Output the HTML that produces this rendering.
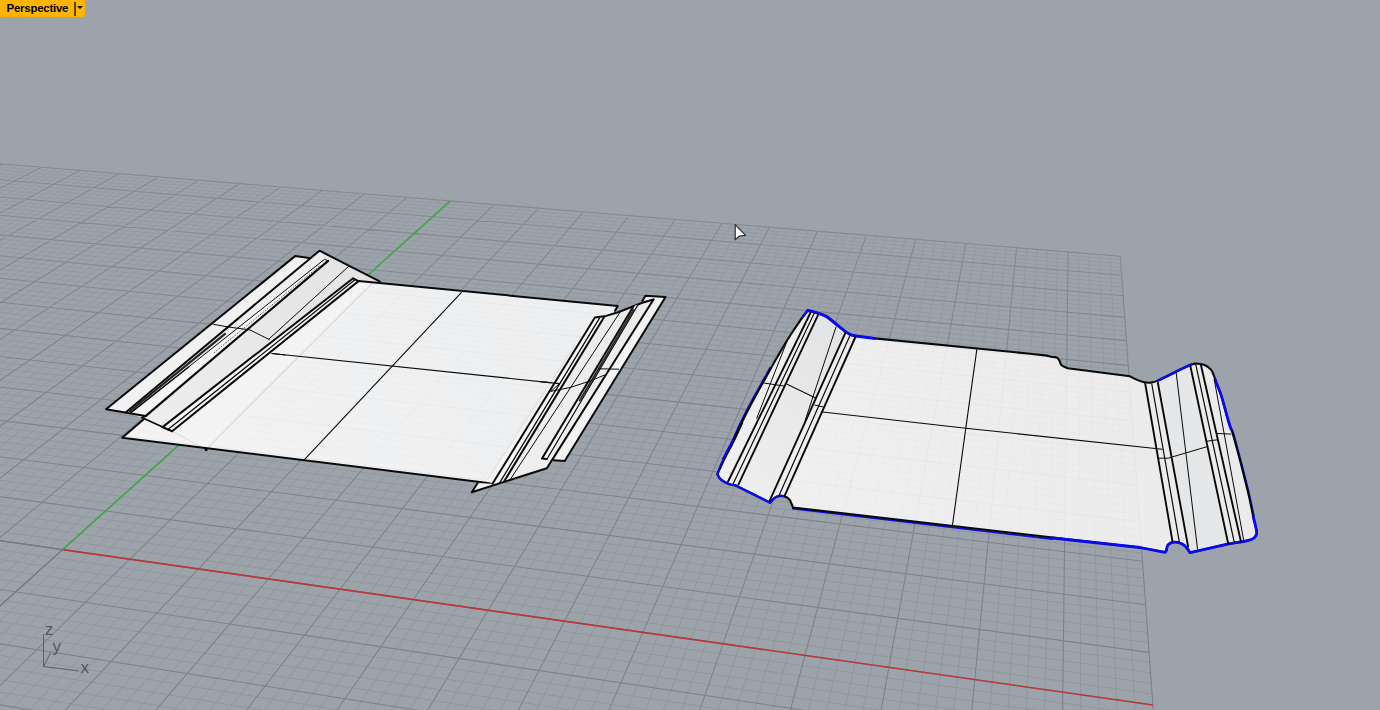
<!DOCTYPE html>
<html><head><meta charset="utf-8"><title>Perspective</title>
<style>
html,body{margin:0;padding:0;background:#9da3aa;overflow:hidden}
#vp{position:relative;width:1380px;height:710px;background:#9da3aa;overflow:hidden;font-family:"Liberation Sans",sans-serif}
#vp svg{position:absolute;left:0;top:0}
#title{position:absolute;left:0;top:0;width:85px;height:17px;background:#ffb400;clip-path:polygon(0 0,100% 0,100% 14.6px,83px 100%,0 100%)}
#title span{position:absolute;left:6.5px;top:1px;font-size:11.4px;font-weight:bold;color:#000;line-height:14px;letter-spacing:-0.2px}
#title i{position:absolute;left:73.8px;top:2px;width:2px;height:13.6px;background:#5c4300}
#title b{position:absolute;left:76.8px;top:6.4px;width:0;height:0;border-left:3px solid transparent;border-right:3px solid transparent;border-top:3.6px solid #000}
.ax{font-size:17px;fill:#55585c;font-family:"Liberation Sans",sans-serif}
</style></head><body>
<div id="vp">
<svg width="1380" height="710" viewBox="0 0 1380 710">
<defs>
<linearGradient id="gMainL" gradientUnits="userSpaceOnUse" x1="150" y1="440" x2="600" y2="300"><stop offset="0" stop-color="#f3f3f4"/><stop offset="1" stop-color="#eeeff0"/></linearGradient>
<linearGradient id="gPanL" gradientUnits="userSpaceOnUse" x1="150" y1="420" x2="350" y2="260"><stop offset="0" stop-color="#ededed"/><stop offset="1" stop-color="#e4e4e4"/></linearGradient>
<linearGradient id="gPanR" gradientUnits="userSpaceOnUse" x1="480" y1="490" x2="640" y2="300"><stop offset="0" stop-color="#f0f0f0"/><stop offset="1" stop-color="#ebebeb"/></linearGradient>
<linearGradient id="gMainR" gradientUnits="userSpaceOnUse" x1="800" y1="500" x2="1150" y2="380"><stop offset="0" stop-color="#f0f0f1"/><stop offset="1" stop-color="#ebebec"/></linearGradient>
<linearGradient id="gFlL" gradientUnits="userSpaceOnUse" x1="740" y1="480" x2="840" y2="320"><stop offset="0" stop-color="#ededee"/><stop offset="1" stop-color="#e3e4e5"/></linearGradient>
<linearGradient id="fadeMinor" gradientUnits="userSpaceOnUse" x1="0" y1="150" x2="0" y2="710"><stop offset="0" stop-color="#8c929a" stop-opacity="0.4"/><stop offset="0.35" stop-color="#8c929a" stop-opacity="0.62"/><stop offset="1" stop-color="#8c929a" stop-opacity="0.8"/></linearGradient>
<linearGradient id="fadeMajor" gradientUnits="userSpaceOnUse" x1="0" y1="150" x2="0" y2="710"><stop offset="0" stop-color="#7c8189" stop-opacity="0.7"/><stop offset="0.4" stop-color="#7c8189" stop-opacity="0.9"/><stop offset="1" stop-color="#7c8189" stop-opacity="1"/></linearGradient>
<clipPath id="clipL"><polygon points="122.2,437.8 143.7,419.3 358.5,281.1 617.8,305.9 497.7,484.2"/></clipPath>
<clipPath id="clipR"><path d="M807.7 310.6C808.3 310.7 809.6 310.6 811.5 311.1C813.4 311.6 816.6 312.7 819.1 313.6C821.6 314.5 823.8 314.9 826.6 316.6C829.4 318.3 832.9 321.5 836.0 324.0C839.1 326.5 843.1 329.9 845.5 331.6C847.9 333.3 848.6 333.6 850.2 334.3C851.8 335.0 850.8 335.1 854.9 335.8C859.0 336.5 871.4 338.0 874.7 338.4L1030.0 353.7L1047.0 355.6C1047.9 355.8 1050.9 356.7 1052.6 357.0C1054.3 357.3 1055.9 357.0 1057.0 357.6C1058.1 358.2 1058.6 359.3 1059.4 360.6C1060.2 361.9 1060.2 363.9 1061.6 365.2C1063.0 366.5 1066.7 367.8 1067.7 368.3L1130.0 376.3C1131.1 376.9 1134.4 378.7 1136.6 379.6C1138.8 380.6 1140.8 381.5 1143.2 382.0C1145.6 382.5 1148.3 382.9 1150.8 382.6C1153.3 382.3 1154.2 382.2 1158.4 380.4C1162.6 378.6 1170.3 374.4 1175.7 371.8C1181.1 369.2 1187.2 366.1 1190.9 364.7C1194.6 363.3 1195.6 363.6 1198.0 363.7C1200.4 363.8 1202.9 364.2 1205.1 365.2C1207.3 366.2 1209.7 367.9 1211.2 369.8C1212.7 371.7 1213.4 374.3 1214.2 376.4C1215.0 378.5 1215.0 379.3 1216.2 382.5C1217.4 385.7 1219.3 389.3 1221.3 395.7C1223.3 402.1 1226.3 414.0 1228.4 421.0C1230.5 428.0 1230.8 426.4 1234.0 437.9C1237.2 449.4 1244.3 476.9 1247.5 490.0C1250.7 503.1 1251.7 509.6 1253.2 516.4C1254.7 523.2 1256.0 527.5 1256.5 530.6C1257.0 533.7 1256.8 533.5 1256.3 534.8C1255.8 536.1 1254.8 537.6 1253.2 538.6C1251.6 539.6 1250.7 540.0 1246.6 540.9C1242.5 541.8 1231.7 543.3 1228.7 543.8L1190.0 552.7C1189.5 552.0 1188.3 549.8 1187.2 548.5C1186.1 547.2 1185.0 545.7 1183.4 544.7C1181.8 543.7 1179.6 542.8 1177.7 542.4C1175.8 542.0 1173.8 541.9 1172.1 542.4C1170.4 542.9 1168.8 543.9 1167.8 545.2C1166.8 546.5 1166.9 549.2 1166.4 550.4C1165.9 551.6 1165.2 552.0 1165.0 552.3L1140.0 547.5L793.0 507.5C792.7 506.8 792.0 504.6 791.3 503.2C790.6 501.8 790.3 500.2 789.0 499.0C787.7 497.8 785.0 496.6 783.3 496.1C781.6 495.6 780.2 495.7 778.6 496.1C777.0 496.5 775.3 497.4 773.9 498.5C772.5 499.6 770.7 502.0 770.1 502.7L735.2 485.3C734.1 485.1 731.0 484.8 728.6 483.9C726.2 482.9 722.8 481.1 721.0 479.6C719.2 478.1 718.2 476.1 717.7 474.9C717.2 473.6 717.2 474.8 718.2 472.1C719.2 469.4 721.3 464.2 723.9 458.9C726.5 453.6 730.6 446.4 733.6 440.3C736.6 434.2 739.0 428.3 741.8 422.5C744.6 416.7 747.7 410.6 750.3 405.7C752.9 400.8 754.9 397.2 757.2 393.0C759.5 388.8 762.0 384.4 764.3 380.3C766.6 376.2 768.6 372.4 770.8 368.5C773.0 364.6 775.0 360.9 777.3 357.0C779.5 353.1 782.0 348.9 784.3 345.0C786.6 341.1 789.0 337.4 791.3 333.8C793.6 330.2 796.3 326.2 798.3 323.3C800.2 320.4 801.4 318.6 803.0 316.5C804.6 314.4 806.9 311.6 807.7 310.6Z"/></clipPath>
</defs>
<g id="grid">
<defs><path id="gMinor" d="M-2886.6 1378.3L-101.0 155.4M-2834.2 1342.7L1348.7 3400.9M-2872.9 1385.3L-93.7 156.0M-2770.5 1315.0L1339.1 3267.9M-2859.2 1392.3L-86.3 156.6M-2708.8 1288.1L1330.1 3144.0M-2845.3 1399.4L-78.9 157.2M-2649.1 1262.1L1321.7 3028.3M-2817.3 1413.7L-64.1 158.4M-2535.2 1212.4L1306.4 2818.3M-2803.1 1420.9L-56.7 159.0M-2480.8 1188.7L1299.5 2722.8M-2788.8 1428.2L-49.2 159.7M-2428.0 1165.7L1292.9 2632.9M-2774.3 1435.6L-41.8 160.3M-2376.7 1143.3L1286.8 2548.0M-2745.1 1450.5L-26.8 161.5M-2278.6 1100.6L1275.4 2392.0M-2730.3 1458.0L-19.2 162.1M-2231.6 1080.1L1270.2 2320.1M-2715.4 1465.6L-11.7 162.8M-2185.9 1060.2L1265.3 2251.8M-2700.4 1473.3L-4.1 163.4M-2141.4 1040.8L1260.5 2187.0M-2669.9 1488.9L11.0 164.6M-2056.1 1003.6L1251.8 2066.4M-2654.4 1496.7L18.6 165.3M-2015.1 985.7L1247.7 2010.4M-2638.9 1504.7L26.3 165.9M-1975.1 968.3L1243.8 1956.8M-2623.2 1512.7L33.9 166.5M-1936.2 951.4L1240.1 1905.6M-2591.4 1528.9L49.3 167.8M-1861.2 918.7L1233.1 1809.8M-2575.3 1537.1L57.0 168.4M-1825.2 903.0L1229.9 1764.8M-2559.0 1545.4L64.7 169.1M-1789.9 887.6L1226.7 1721.7M-2542.6 1553.8L72.5 169.7M-1755.6 872.6L1223.7 1680.3M-2509.4 1570.7L88.0 171.0M-1689.2 843.7L1218.1 1602.2M-2492.6 1579.3L95.8 171.6M-1657.2 829.8L1215.4 1565.3M-2475.6 1588.0L103.6 172.3M-1626.0 816.2L1212.8 1529.8M-2458.4 1596.7L111.5 172.9M-1595.4 802.8L1210.3 1495.6M-2423.7 1614.4L127.2 174.2M-1536.3 777.1L1205.6 1430.8M-2406.1 1623.4L135.1 174.9M-1507.7 764.6L1203.4 1400.1M-2388.3 1632.5L143.0 175.5M-1479.7 752.4L1201.2 1370.4M-2370.4 1641.6L151.0 176.2M-1452.3 740.5L1199.1 1341.6M-2334.0 1660.2L166.9 177.5M-1399.3 717.4L1195.2 1287.0M-2315.6 1669.6L174.9 178.2M-1373.7 706.2L1193.3 1260.9M-2297.0 1679.1L182.9 178.8M-1348.5 695.2L1191.4 1235.7M-2278.2 1688.7L191.0 179.5M-1323.9 684.5L1189.7 1211.2M-2240.1 1708.1L207.1 180.8M-1276.0 663.7L1186.3 1164.5M-2220.7 1718.0L215.2 181.5M-1252.8 653.6L1184.7 1142.2M-2201.2 1727.9L223.3 182.2M-1230.1 643.6L1183.1 1120.5M-2181.5 1738.0L231.4 182.8M-1207.8 633.9L1181.5 1099.4M-2141.5 1758.4L247.8 184.2M-1164.5 615.0L1178.6 1059.0M-2121.2 1768.7L256.0 184.9M-1143.4 605.9L1177.2 1039.6M-2100.8 1779.2L264.2 185.5M-1122.7 596.9L1175.8 1020.7M-2080.1 1789.7L272.4 186.2M-1102.4 588.0L1174.5 1002.4M-2038.1 1811.1L289.0 187.6M-1063.0 570.8L1171.9 967.1M-2016.8 1822.0L297.3 188.3M-1043.8 562.4L1170.7 950.1M-1995.2 1833.0L305.6 188.9M-1024.9 554.2L1169.5 933.6M-1973.5 1844.1L314.0 189.6M-1006.4 546.1L1168.3 917.5M-1929.3 1866.6L330.7 191.0M-970.3 530.4L1166.1 886.4M-1906.9 1878.0L339.1 191.7M-952.7 522.8L1165.0 871.4M-1884.3 1889.6L347.5 192.4M-935.4 515.2L1163.9 856.8M-1861.4 1901.3L356.0 193.1M-918.5 507.8L1162.9 842.5M-1814.9 1925.0L373.0 194.5M-885.3 493.4L1160.9 814.9M-1791.3 1937.0L381.5 195.2M-869.2 486.3L1159.9 801.6M-1767.4 1949.2L390.0 195.9M-853.3 479.4L1159.0 788.6M-1743.3 1961.5L398.6 196.6M-837.6 472.6L1158.0 775.8M-1694.2 1986.5L415.8 198.0M-807.1 459.3L1156.3 751.2M-1669.3 1999.2L424.4 198.8M-792.2 452.8L1155.4 739.3M-1644.1 2012.1L433.0 199.5M-777.6 446.4L1154.5 727.6M-1618.7 2025.1L441.7 200.2M-763.1 440.1L1153.7 716.2M-1566.9 2051.5L459.1 201.6M-734.9 427.8L1152.1 694.0M-1540.6 2064.9L467.9 202.3M-721.1 421.8L1151.3 683.3M-1514.0 2078.5L476.6 203.1M-707.6 415.9L1150.6 672.8M-1487.0 2092.2L485.4 203.8M-694.2 410.1L1149.8 662.5M-1432.3 2120.1L503.0 205.2M-668.0 398.7L1148.4 642.5M-1404.4 2134.3L511.9 206.0M-655.3 393.1L1147.7 632.7M-1376.3 2148.7L520.8 206.7M-642.7 387.6L1147.0 623.2M-1347.8 2163.3L529.7 207.4M-630.2 382.2L1146.3 613.9M-1289.8 2192.8L547.5 208.9M-605.9 371.6L1145.0 595.7M-1260.3 2207.9L556.5 209.7M-594.0 366.4L1144.3 586.9M-1230.4 2223.1L565.5 210.4M-582.3 361.3L1143.7 578.2M-1200.2 2238.5L574.5 211.1M-570.8 356.3L1143.1 569.7M-1138.7 2269.9L592.6 212.6M-548.1 346.4L1141.9 553.1M-1107.3 2285.9L601.7 213.4M-537.0 341.6L1141.3 545.0M-1075.6 2302.1L610.8 214.1M-526.1 336.8L1140.7 537.1M-1043.5 2318.5L619.9 214.9M-515.3 332.1L1140.1 529.3M-978.1 2351.8L638.3 216.4M-494.1 322.9L1139.0 514.1M-944.8 2368.8L647.5 217.2M-483.7 318.4L1138.5 506.7M-911.0 2386.0L656.7 217.9M-473.5 313.9L1138.0 499.4M-876.9 2403.5L666.0 218.7M-463.4 309.5L1137.4 492.3M-807.2 2439.0L684.6 220.2M-443.6 300.9L1136.4 478.3M-771.7 2457.1L693.9 221.0M-433.9 296.6L1135.9 471.5M-735.7 2475.5L703.3 221.8M-424.3 292.5L1135.5 464.8M-699.3 2494.1L712.7 222.5M-414.8 288.3L1135.0 458.2M-624.9 2532.0L731.5 224.1M-396.2 280.2L1134.0 445.3M-587.0 2551.3L741.0 224.9M-387.1 276.3L1133.6 439.1M-548.6 2570.9L750.4 225.7M-378.1 272.3L1133.1 432.9M-509.6 2590.8L759.9 226.5M-369.2 268.5L1132.7 426.8M-430.1 2631.4L779.0 228.0M-351.7 260.8L1131.8 414.9M-389.5 2652.1L788.6 228.8M-343.2 257.1L1131.4 409.0M-348.4 2673.1L798.2 229.6M-334.7 253.4L1131.0 403.3M-306.6 2694.3L807.9 230.4M-326.3 249.8L1130.6 397.7M-221.4 2737.8L827.2 232.0M-309.9 242.6L1129.8 386.6M-177.8 2760.0L837.0 232.8M-301.8 239.1L1129.4 381.2M-133.7 2782.6L846.7 233.6M-293.8 235.6L1129.0 375.9M-88.9 2805.4L856.5 234.4M-285.9 232.1L1128.6 370.6M2.8 2852.2L876.1 236.0M-270.4 225.4L1127.9 360.3M49.6 2876.1L886.0 236.9M-262.7 222.1L1127.5 355.3M97.1 2900.3L895.8 237.7M-255.2 218.8L1127.1 350.3M145.4 2924.9L905.7 238.5M-247.7 215.5L1126.8 345.4M244.1 2975.3L925.6 240.1M-233.1 209.1L1126.1 335.8M294.6 3001.0L935.6 241.0M-225.8 206.0L1125.7 331.1M345.9 3027.2L945.6 241.8M-218.7 202.9L1125.4 326.5M398.0 3053.8L955.7 242.6M-211.6 199.8L1125.1 321.9M504.7 3108.2L975.9 244.3M-197.8 193.7L1124.4 313.0M559.4 3136.1L986.0 245.1M-190.9 190.8L1124.1 308.6M614.9 3164.4L996.2 246.0M-184.2 187.8L1123.8 304.2M671.4 3193.2L1006.3 246.8M-177.5 184.9L1123.5 299.9M787.0 3252.2L1026.8 248.5M-164.3 179.2L1122.9 291.5M846.3 3282.5L1037.1 249.3M-157.8 176.3L1122.6 287.4M906.6 3313.2L1047.4 250.2M-151.4 173.5L1122.3 283.3M968.0 3344.5L1057.7 251.0M-145.1 170.8L1122.0 279.3M1093.8 3408.7L1078.5 252.7M-132.6 165.3L1121.4 271.4M1158.4 3441.7L1088.9 253.6M-126.4 162.7L1121.1 267.5M1224.1 3475.2L1099.3 254.5M-120.3 160.0L1120.8 263.7M1291.0 3509.3L1109.8 255.3M-114.3 157.4L1120.6 259.9" fill="none"/><path id="gMajor" d="M-2900.1 1371.4L-108.3 154.8M-2900.1 1371.4L1359.1 3544.0M-2831.4 1406.5L-71.5 157.8M-2591.3 1236.8L1313.8 2920.0M-2759.8 1443.0L-34.3 160.9M-2326.9 1121.7L1280.9 2467.8M-2685.2 1481.0L3.4 164.0M-2098.2 1022.0L1256.1 2125.2M-2607.4 1520.7L41.6 167.2M-1898.3 934.8L1236.6 1856.7M-2526.1 1562.2L80.2 170.3M-1722.0 858.0L1220.8 1640.4M-2441.1 1605.5L119.3 173.6M-1565.5 789.8L1207.9 1462.6M-2352.3 1650.9L158.9 176.8M-1425.6 728.8L1197.1 1313.9M-2259.2 1698.3L199.0 180.1M-1299.7 674.0L1187.9 1187.5M-2161.6 1748.1L239.6 183.5M-1185.9 624.4L1180.1 1078.9M-2059.2 1800.4L280.7 186.9M-1082.5 579.3L1173.2 984.5M-1951.5 1855.3L322.3 190.3M-988.2 538.2L1167.2 901.7M-1838.2 1913.1L364.5 193.8M-901.7 500.5L1161.9 828.6M-1718.9 1974.0L407.2 197.3M-822.3 465.9L1157.1 763.4M-1592.9 2038.2L450.4 200.9M-748.9 433.9L1152.9 705.0M-1459.8 2106.1L494.2 204.5M-681.0 404.3L1149.1 652.4M-1319.0 2178.0L538.6 208.2M-618.0 376.9L1145.6 604.7M-1169.6 2254.1L583.5 211.9M-559.4 351.3L1142.5 561.3M-1011.0 2335.0L629.1 215.7M-504.6 327.5L1139.6 521.6M-842.3 2421.1L675.3 219.5M-453.4 305.2L1136.9 485.2M-662.3 2512.9L722.1 223.3M-405.5 284.3L1134.5 451.7M-470.1 2610.9L769.5 227.2M-360.4 264.6L1132.3 420.8M-264.3 2715.9L817.5 231.2M-318.0 246.2L1130.2 392.1M-43.4 2828.6L866.3 235.2M-278.1 228.7L1128.2 365.4M194.4 2949.9L915.7 239.3M-240.3 212.3L1126.4 340.6M451.0 3080.8L965.8 243.4M-204.7 196.7L1124.7 317.4M728.7 3222.5L1016.6 247.6M-170.9 182.0L1123.2 295.7M1030.4 3376.3L1068.1 251.9M-138.8 168.0L1121.7 275.3M1359.1 3544.0L1120.3 256.2M-108.3 154.8L1120.3 256.2" fill="none"/><g id="gridlines"><use href="#gMinor" stroke="#000" stroke-width="1" opacity="0.5"/><use href="#gMajor" stroke="#000" stroke-width="1"/></g></defs>
<use href="#gMinor" stroke="url(#fadeMinor)" stroke-width="1"/>
<use href="#gMajor" stroke="url(#fadeMajor)" stroke-width="1.1"/>
<line x1="-748.9" y1="433.9" x2="62.6" y2="549.6" stroke="#747980" stroke-width="1.2" />
<line x1="-1592.9" y1="2038.2" x2="62.6" y2="549.6" stroke="#747980" stroke-width="1.2" />
<line x1="62.6" y1="549.6" x2="1152.9" y2="705.0" stroke="#b5393b" stroke-width="1.6" />
<line x1="62.6" y1="549.6" x2="450.4" y2="200.9" stroke="#3fa845" stroke-width="1.6" />
</g>
<g id="left-object">
<polygon points="122.2,437.8 143.7,419.3 358.5,281.1 617.8,305.9 497.7,484.2" fill="url(#gMainL)" stroke="none" stroke-width="0" stroke-linejoin="round" />
<use href="#gridlines" clip-path="url(#clipL)" opacity="0.028"/>
<polygon points="358.5,281.1 379.7,281.8 372.0,283.5 206.0,449.4 172.1,431.2" fill="#f3f3f4" stroke="none" stroke-width="0" stroke-linejoin="round" />
<polygon points="106.0,409.2 295.1,256.1 309.1,258.0 330.0,262.0 145.6,416.1" fill="#f1f1f2" stroke="none" stroke-width="0" stroke-linejoin="round" />
<polygon points="319.5,250.7 379.7,281.4 358.5,281.1 172.1,431.2 141.7,417.5 125.6,412.4" fill="url(#gPanL)" stroke="none" stroke-width="0" stroke-linejoin="round" />
<polygon points="319.5,250.7 322.5,252.2 324.5,259.3 130.3,413.1 125.6,412.4" fill="#eeeeef" stroke="none" stroke-width="0" stroke-linejoin="round" />
<polygon points="324.5,259.3 328.1,260.8 145.6,416.1 130.3,413.1" fill="#f4f4f4" stroke="none" stroke-width="0" stroke-linejoin="round" />
<polygon points="353.1,278.3 358.5,281.1 172.1,431.2 162.5,427.1" fill="#f6f6f6" stroke="none" stroke-width="0" stroke-linejoin="round" />
<polyline points="372.0,283.5 207.0,448.4" fill="none" stroke="#d9d9d9" stroke-width="1.2" stroke-linejoin="round" stroke-linecap="round" />
<polyline points="172.1,431.2 204.0,448.3" fill="none" stroke="#dcdcdc" stroke-width="1.0" stroke-linejoin="round" stroke-linecap="round" />
<polyline points="143.7,419.3 122.2,437.8 480.0,482.0 492.5,483.8" fill="none" stroke="#0a0a0a" stroke-width="2.0" stroke-linejoin="round" stroke-linecap="round" />
<polyline points="358.5,281.1 617.8,305.9 615.0,310.7" fill="none" stroke="#0a0a0a" stroke-width="2.0" stroke-linejoin="round" stroke-linecap="round" />
<polyline points="461.3,292.7 303.5,460.6" fill="none" stroke="#0a0a0a" stroke-width="1.1" stroke-linejoin="round" stroke-linecap="round" />
<polyline points="272.0,353.5 559.4,383.6" fill="none" stroke="#0a0a0a" stroke-width="1.1" stroke-linejoin="round" stroke-linecap="round" />
<circle cx="206.1" cy="449.6" r="1.6" fill="#0a0a0a"/>
<polygon points="486.8,480.5 592.0,320.0 596.0,318.0 493.0,483.8" fill="#f4f4f5" stroke="none" stroke-width="0" stroke-linejoin="round" />
<polyline points="486.8,480.5 575.0,345.0" fill="none" stroke="#dcdcdd" stroke-width="1.0" stroke-linejoin="round" stroke-linecap="round" />
<polyline points="309.1,258.0 295.1,256.1 106.0,409.2 145.6,416.1" fill="none" stroke="#0a0a0a" stroke-width="2.0" stroke-linejoin="round" stroke-linecap="round" />
<polyline points="125.6,412.4 319.5,250.7 379.7,281.4" fill="none" stroke="#0a0a0a" stroke-width="2.0" stroke-linejoin="round" stroke-linecap="round" />
<polyline points="145.6,416.1 141.7,417.5 172.1,431.2" fill="none" stroke="#0a0a0a" stroke-width="1.8" stroke-linejoin="round" stroke-linecap="round" />
<polyline points="130.3,413.1 324.5,259.3 328.1,260.8 145.6,416.1" fill="none" stroke="#0a0a0a" stroke-width="1.0" stroke-linejoin="round" stroke-linecap="round" />
<polyline points="130.3,413.1 188.6,367.0" fill="none" stroke="#0a0a0a" stroke-width="1.4" stroke-linejoin="round" stroke-linecap="round" />
<polyline points="328.1,260.8 145.6,416.1" fill="none" stroke="#0a0a0a" stroke-width="2.2" stroke-linejoin="round" stroke-linecap="round" />
<polyline points="319.0,266.3 213.8,352.9" fill="none" stroke="#555" stroke-width="1.0" stroke-linejoin="round" stroke-linecap="round" stroke-dasharray="0.8 2.2"/>
<polyline points="129.9,411.2 225.0,333.9" fill="none" stroke="#262626" stroke-width="2.2" stroke-linejoin="round" stroke-linecap="round" />
<polyline points="348.4,266.6 269.0,339.0" fill="none" stroke="#0a0a0a" stroke-width="1.0" stroke-linejoin="round" stroke-linecap="round" />
<polyline points="162.5,427.1 353.1,278.3 358.5,281.1" fill="none" stroke="#0a0a0a" stroke-width="2.0" stroke-linejoin="round" stroke-linecap="round" />
<polyline points="355.3,279.6 168.0,429.6" fill="none" stroke="#0a0a0a" stroke-width="1.3" stroke-linejoin="round" stroke-linecap="round" />
<polyline points="358.5,281.1 172.1,431.2" fill="none" stroke="#0a0a0a" stroke-width="2.0" stroke-linejoin="round" stroke-linecap="round" />
<polyline points="162.5,427.1 168.0,429.6 172.1,431.2" fill="none" stroke="#0a0a0a" stroke-width="1.8" stroke-linejoin="round" stroke-linecap="round" />
<polyline points="213.5,324.3 227.7,326.9 250.0,329.9 269.3,339.6" fill="none" stroke="#0a0a0a" stroke-width="1.0" stroke-linejoin="round" stroke-linecap="round" />
<polyline points="272.0,353.5 285.0,355.0" fill="none" stroke="#0a0a0a" stroke-width="1.1" stroke-linejoin="round" stroke-linecap="round" />
<polygon points="645.5,295.8 665.5,297.0 564.7,461.1 553.4,460.2 653.5,299.5 642.3,301.1" fill="#f3f3f3" stroke="none" stroke-width="0" stroke-linejoin="round" />
<polyline points="642.3,301.1 645.5,295.8 665.5,297.0 564.7,461.1 553.4,460.2" fill="none" stroke="#0a0a0a" stroke-width="2.0" stroke-linejoin="round" stroke-linecap="round" />
<polygon points="594.9,317.5 606.1,315.9 618.2,312.3 630.2,307.5 642.3,302.8 653.5,299.5 546.8,468.2 471.8,492.3 477.5,483.3 492.5,483.8" fill="url(#gPanR)" stroke="none" stroke-width="0" stroke-linejoin="round" />
<polygon points="594.9,317.5 604.0,317.2 504.5,480.8 492.5,483.8" fill="#f7f7f7" stroke="none" stroke-width="0" stroke-linejoin="round" />
<polyline points="492.5,483.8 594.9,317.5 606.1,315.9 618.2,312.3 630.2,307.5 642.3,302.8 653.5,299.5" fill="none" stroke="#0a0a0a" stroke-width="2.0" stroke-linejoin="round" stroke-linecap="round" />
<polyline points="653.5,299.5 546.8,468.2 471.8,492.3 477.5,483.3" fill="none" stroke="#0a0a0a" stroke-width="2.0" stroke-linejoin="round" stroke-linecap="round" />
<polyline points="599.5,318.2 499.6,482.8" fill="none" stroke="#0a0a0a" stroke-width="1.3" stroke-linejoin="round" stroke-linecap="round" />
<polyline points="604.0,317.2 504.5,480.8" fill="none" stroke="#0a0a0a" stroke-width="2.0" stroke-linejoin="round" stroke-linecap="round" />
<polyline points="620.5,311.5 510.8,478.6" fill="none" stroke="#0a0a0a" stroke-width="1.0" stroke-linejoin="round" stroke-linecap="round" />
<polygon points="633.5,306.3 638.0,304.6 547.0,459.0 542.0,458.6" fill="#f8f8f8" stroke="none" stroke-width="0" stroke-linejoin="round" />
<polyline points="633.5,306.3 542.0,458.6 547.0,459.0" fill="none" stroke="#0a0a0a" stroke-width="2.0" stroke-linejoin="round" stroke-linecap="round" />
<polyline points="638.0,304.6 547.0,459.0" fill="none" stroke="#0a0a0a" stroke-width="1.2" stroke-linejoin="round" stroke-linecap="round" />
<polyline points="633.5,309.9 579.7,400.5" fill="none" stroke="#2e2e2e" stroke-width="2.0" stroke-linejoin="round" stroke-linecap="round" stroke-dasharray="1.5 0.6"/>
<polyline points="540.0,381.6 559.4,383.6" fill="none" stroke="#0a0a0a" stroke-width="1.1" stroke-linejoin="round" stroke-linecap="round" />
<polyline points="559.4,383.6 551.0,391.3" fill="none" stroke="#0a0a0a" stroke-width="1.0" stroke-linejoin="round" stroke-linecap="round" />
<polyline points="551.0,391.3 570.0,387.5 590.0,381.0 604.5,375.1" fill="none" stroke="#0a0a0a" stroke-width="1.0" stroke-linejoin="round" stroke-linecap="round" />
<polyline points="598.9,368.8 618.6,369.2" fill="none" stroke="#0a0a0a" stroke-width="1.0" stroke-linejoin="round" stroke-linecap="round" />
</g>
<g id="right-object">
<path d="M807.7 310.6C808.3 310.7 809.6 310.6 811.5 311.1C813.4 311.6 816.6 312.7 819.1 313.6C821.6 314.5 823.8 314.9 826.6 316.6C829.4 318.3 832.9 321.5 836.0 324.0C839.1 326.5 843.1 329.9 845.5 331.6C847.9 333.3 848.6 333.6 850.2 334.3C851.8 335.0 850.8 335.1 854.9 335.8C859.0 336.5 871.4 338.0 874.7 338.4L1030.0 353.7L1047.0 355.6C1047.9 355.8 1050.9 356.7 1052.6 357.0C1054.3 357.3 1055.9 357.0 1057.0 357.6C1058.1 358.2 1058.6 359.3 1059.4 360.6C1060.2 361.9 1060.2 363.9 1061.6 365.2C1063.0 366.5 1066.7 367.8 1067.7 368.3L1130.0 376.3C1131.1 376.9 1134.4 378.7 1136.6 379.6C1138.8 380.6 1140.8 381.5 1143.2 382.0C1145.6 382.5 1148.3 382.9 1150.8 382.6C1153.3 382.3 1154.2 382.2 1158.4 380.4C1162.6 378.6 1170.3 374.4 1175.7 371.8C1181.1 369.2 1187.2 366.1 1190.9 364.7C1194.6 363.3 1195.6 363.6 1198.0 363.7C1200.4 363.8 1202.9 364.2 1205.1 365.2C1207.3 366.2 1209.7 367.9 1211.2 369.8C1212.7 371.7 1213.4 374.3 1214.2 376.4C1215.0 378.5 1215.0 379.3 1216.2 382.5C1217.4 385.7 1219.3 389.3 1221.3 395.7C1223.3 402.1 1226.3 414.0 1228.4 421.0C1230.5 428.0 1230.8 426.4 1234.0 437.9C1237.2 449.4 1244.3 476.9 1247.5 490.0C1250.7 503.1 1251.7 509.6 1253.2 516.4C1254.7 523.2 1256.0 527.5 1256.5 530.6C1257.0 533.7 1256.8 533.5 1256.3 534.8C1255.8 536.1 1254.8 537.6 1253.2 538.6C1251.6 539.6 1250.7 540.0 1246.6 540.9C1242.5 541.8 1231.7 543.3 1228.7 543.8L1190.0 552.7C1189.5 552.0 1188.3 549.8 1187.2 548.5C1186.1 547.2 1185.0 545.7 1183.4 544.7C1181.8 543.7 1179.6 542.8 1177.7 542.4C1175.8 542.0 1173.8 541.9 1172.1 542.4C1170.4 542.9 1168.8 543.9 1167.8 545.2C1166.8 546.5 1166.9 549.2 1166.4 550.4C1165.9 551.6 1165.2 552.0 1165.0 552.3L1140.0 547.5L793.0 507.5C792.7 506.8 792.0 504.6 791.3 503.2C790.6 501.8 790.3 500.2 789.0 499.0C787.7 497.8 785.0 496.6 783.3 496.1C781.6 495.6 780.2 495.7 778.6 496.1C777.0 496.5 775.3 497.4 773.9 498.5C772.5 499.6 770.7 502.0 770.1 502.7L735.2 485.3C734.1 485.1 731.0 484.8 728.6 483.9C726.2 482.9 722.8 481.1 721.0 479.6C719.2 478.1 718.2 476.1 717.7 474.9C717.2 473.6 717.2 474.8 718.2 472.1C719.2 469.4 721.3 464.2 723.9 458.9C726.5 453.6 730.6 446.4 733.6 440.3C736.6 434.2 739.0 428.3 741.8 422.5C744.6 416.7 747.7 410.6 750.3 405.7C752.9 400.8 754.9 397.2 757.2 393.0C759.5 388.8 762.0 384.4 764.3 380.3C766.6 376.2 768.6 372.4 770.8 368.5C773.0 364.6 775.0 360.9 777.3 357.0C779.5 353.1 782.0 348.9 784.3 345.0C786.6 341.1 789.0 337.4 791.3 333.8C793.6 330.2 796.3 326.2 798.3 323.3C800.2 320.4 801.4 318.6 803.0 316.5C804.6 314.4 806.9 311.6 807.7 310.6Z" fill="url(#gMainR)" stroke="none" stroke-width="0" stroke-linejoin="round" stroke-linecap="round" />
<use href="#gridlines" clip-path="url(#clipR)" opacity="0.028"/>
<polygon points="818.1,314.8 819.1,313.6 826.6,316.6 836.0,324.0 845.5,332.7 769.6,500.8 735.2,485.3 738.5,484.3" fill="url(#gFlL)" stroke="none" stroke-width="0" stroke-linejoin="round" />
<polygon points="1157.9,383.0 1175.7,371.8 1190.4,366.2 1228.2,543.8 1190.0,552.7 1188.1,546.6" fill="#e6e7e8" stroke="none" stroke-width="0" stroke-linejoin="round" />
<path d="M723.9 458.9C725.5 455.8 730.6 446.4 733.6 440.3C736.6 434.2 739.0 428.3 741.8 422.5C744.6 416.7 747.7 410.6 750.3 405.7C752.9 400.8 754.9 397.2 757.2 393.0C759.5 388.8 762.0 384.4 764.3 380.3C766.6 376.2 769.7 370.5 770.8 368.5" fill="none" stroke="#0a0aee" stroke-width="1.8" stroke-linejoin="round" stroke-linecap="round" transform="translate(-0.9,-0.5)"/>
<path d="M793 507.5L1052.5 538" fill="none" stroke="#0a0aee" stroke-width="1.8" stroke-linejoin="round" stroke-linecap="round" transform="translate(-0.2,1.1)"/>
<path d="M1231.0 429.0C1231.5 430.5 1231.2 427.7 1234.0 437.9C1236.8 448.1 1244.3 476.9 1247.5 490.0C1250.7 503.1 1252.2 512.0 1253.2 516.4" fill="none" stroke="#0a0aee" stroke-width="1.6" stroke-linejoin="round" stroke-linecap="round" transform="translate(0.9,0.2)"/>
<path d="M807.7 310.6C808.3 310.7 809.6 310.6 811.5 311.1C813.4 311.6 816.6 312.7 819.1 313.6C821.6 314.5 823.8 314.9 826.6 316.6C829.4 318.3 832.9 321.5 836.0 324.0C839.1 326.5 843.1 329.9 845.5 331.6C847.9 333.3 848.6 333.6 850.2 334.3C851.8 335.0 850.8 335.1 854.9 335.8C859.0 336.5 871.4 338.0 874.7 338.4L1030.0 353.7L1047.0 355.6C1047.9 355.8 1050.9 356.7 1052.6 357.0C1054.3 357.3 1055.9 357.0 1057.0 357.6C1058.1 358.2 1058.6 359.3 1059.4 360.6C1060.2 361.9 1060.2 363.9 1061.6 365.2C1063.0 366.5 1066.7 367.8 1067.7 368.3L1130.0 376.3C1131.1 376.9 1134.4 378.7 1136.6 379.6C1138.8 380.6 1140.8 381.5 1143.2 382.0C1145.6 382.5 1148.3 382.9 1150.8 382.6C1153.3 382.3 1154.2 382.2 1158.4 380.4C1162.6 378.6 1170.3 374.4 1175.7 371.8C1181.1 369.2 1187.2 366.1 1190.9 364.7C1194.6 363.3 1195.6 363.6 1198.0 363.7C1200.4 363.8 1202.9 364.2 1205.1 365.2C1207.3 366.2 1209.7 367.9 1211.2 369.8C1212.7 371.7 1213.4 374.3 1214.2 376.4C1215.0 378.5 1215.0 379.3 1216.2 382.5C1217.4 385.7 1219.3 389.3 1221.3 395.7C1223.3 402.1 1226.3 414.0 1228.4 421.0C1230.5 428.0 1230.8 426.4 1234.0 437.9C1237.2 449.4 1244.3 476.9 1247.5 490.0C1250.7 503.1 1251.7 509.6 1253.2 516.4C1254.7 523.2 1256.0 527.5 1256.5 530.6C1257.0 533.7 1256.8 533.5 1256.3 534.8C1255.8 536.1 1254.8 537.6 1253.2 538.6C1251.6 539.6 1250.7 540.0 1246.6 540.9C1242.5 541.8 1231.7 543.3 1228.7 543.8L1190.0 552.7C1189.5 552.0 1188.3 549.8 1187.2 548.5C1186.1 547.2 1185.0 545.7 1183.4 544.7C1181.8 543.7 1179.6 542.8 1177.7 542.4C1175.8 542.0 1173.8 541.9 1172.1 542.4C1170.4 542.9 1168.8 543.9 1167.8 545.2C1166.8 546.5 1166.9 549.2 1166.4 550.4C1165.9 551.6 1165.2 552.0 1165.0 552.3L1140.0 547.5L793.0 507.5C792.7 506.8 792.0 504.6 791.3 503.2C790.6 501.8 790.3 500.2 789.0 499.0C787.7 497.8 785.0 496.6 783.3 496.1C781.6 495.6 780.2 495.7 778.6 496.1C777.0 496.5 775.3 497.4 773.9 498.5C772.5 499.6 770.7 502.0 770.1 502.7L735.2 485.3C734.1 485.1 731.0 484.8 728.6 483.9C726.2 482.9 722.8 481.1 721.0 479.6C719.2 478.1 718.2 476.1 717.7 474.9C717.2 473.6 717.2 474.8 718.2 472.1C719.2 469.4 721.3 464.2 723.9 458.9C726.5 453.6 730.6 446.4 733.6 440.3C736.6 434.2 739.0 428.3 741.8 422.5C744.6 416.7 747.7 410.6 750.3 405.7C752.9 400.8 754.9 397.2 757.2 393.0C759.5 388.8 762.0 384.4 764.3 380.3C766.6 376.2 768.6 372.4 770.8 368.5C773.0 364.6 775.0 360.9 777.3 357.0C779.5 353.1 782.0 348.9 784.3 345.0C786.6 341.1 789.0 337.4 791.3 333.8C793.6 330.2 796.3 326.2 798.3 323.3C800.2 320.4 801.4 318.6 803.0 316.5C804.6 314.4 806.9 311.6 807.7 310.6Z" fill="none" stroke="#0a0a0a" stroke-width="2.1" stroke-linejoin="round" stroke-linecap="round" />
<path d="M803.0 316.5C803.8 315.5 806.9 311.6 807.7 310.6" fill="none" stroke="#0a0aee" stroke-width="2.4" stroke-linejoin="round" stroke-linecap="round" />
<path d="M807.7 310.6C808.3 310.7 809.6 310.6 811.5 311.1C813.4 311.6 816.6 312.7 819.1 313.6C821.6 314.5 823.8 314.9 826.6 316.6C829.4 318.3 832.9 321.5 836.0 324.0C839.1 326.5 843.1 329.9 845.5 331.6C847.9 333.3 848.6 333.6 850.2 334.3C851.8 335.0 850.8 335.1 854.9 335.8C859.0 336.5 871.4 338.0 874.7 338.4" fill="none" stroke="#0a0aee" stroke-width="3.0" stroke-linejoin="round" stroke-linecap="round" />
<path d="M733.6 440.3C732.0 443.4 726.5 453.6 723.9 458.9C721.3 464.2 719.2 469.4 718.2 472.1C717.2 474.8 717.2 473.6 717.7 474.9C718.2 476.1 719.2 478.1 721.0 479.6C722.8 481.1 726.2 482.9 728.6 483.9C731.0 484.8 734.1 485.1 735.2 485.3L770.1 502.7C770.7 502.0 772.5 499.6 773.9 498.5C775.3 497.4 777.0 496.5 778.6 496.1C780.2 495.7 782.5 496.1 783.3 496.1" fill="none" stroke="#0a0aee" stroke-width="2.4" stroke-linejoin="round" stroke-linecap="round" />
<path d="M741.8 422.5C740.4 425.5 736.6 434.2 733.6 440.3C730.6 446.4 726.2 454.2 723.9 458.9C721.5 463.6 720.2 466.9 719.5 468.5" fill="none" stroke="#0a0a0a" stroke-width="1.2" stroke-linejoin="round" stroke-linecap="round" transform="translate(0.8,0.4)"/>
<path d="M1052.5 538L1140 547.5L1165 552.3C1165.2 552.0 1165.9 551.6 1166.4 550.4C1166.9 549.2 1166.8 546.5 1167.8 545.2C1168.8 543.9 1170.4 542.9 1172.1 542.4C1173.8 541.9 1175.8 542.0 1177.7 542.4C1179.6 542.8 1181.8 543.7 1183.4 544.7C1185.0 545.7 1186.1 547.2 1187.2 548.5C1188.3 549.8 1189.5 552.0 1190.0 552.7L1228.7 543.8C1231.7 543.3 1242.5 541.8 1246.6 540.9C1250.7 540.0 1251.6 539.6 1253.2 538.6C1254.8 537.6 1255.8 536.1 1256.3 534.8C1256.8 533.5 1257.0 533.7 1256.5 530.6C1256.0 527.5 1253.8 518.8 1253.2 516.4" fill="none" stroke="#0a0aee" stroke-width="2.8" stroke-linejoin="round" stroke-linecap="round" />
<path d="M1158.4 380.4C1161.3 379.0 1170.3 374.4 1175.7 371.8C1181.1 369.2 1188.4 365.9 1190.9 364.7" fill="none" stroke="#0a0aee" stroke-width="2.6" stroke-linejoin="round" stroke-linecap="round" />
<path d="M1215.2 379.5C1215.4 380.0 1215.2 379.8 1216.2 382.5C1217.2 385.2 1219.3 389.3 1221.3 395.7C1223.3 402.1 1226.8 415.4 1228.4 421.0C1230.0 426.6 1230.6 427.7 1231.0 429.0" fill="none" stroke="#0a0aee" stroke-width="2.8" stroke-linejoin="round" stroke-linecap="round" />
<polyline points="787.3,340.5 756.7,418.4" fill="none" stroke="#0a0a0a" stroke-width="1.0" stroke-linejoin="round" stroke-linecap="round" />
<polyline points="810.6,312.5 728.1,481.5" fill="none" stroke="#0a0a0a" stroke-width="1.9" stroke-linejoin="round" stroke-linecap="round" />
<polyline points="814.3,312.9 733.3,483.4" fill="none" stroke="#0a0a0a" stroke-width="1.2" stroke-linejoin="round" stroke-linecap="round" />
<polyline points="818.1,314.8 738.5,484.3" fill="none" stroke="#0a0a0a" stroke-width="1.9" stroke-linejoin="round" stroke-linecap="round" />
<polyline points="836.0,327.1 805.0,420.9" fill="none" stroke="#0a0a0a" stroke-width="1.0" stroke-linejoin="round" stroke-linecap="round" />
<polyline points="845.5,332.7 769.6,500.8" fill="none" stroke="#0a0a0a" stroke-width="1.9" stroke-linejoin="round" stroke-linecap="round" />
<polyline points="850.2,335.1 778.6,496.6" fill="none" stroke="#0a0a0a" stroke-width="1.2" stroke-linejoin="round" stroke-linecap="round" />
<polyline points="855.4,337.0 784.7,495.7" fill="none" stroke="#0a0a0a" stroke-width="1.9" stroke-linejoin="round" stroke-linecap="round" />
<polyline points="763.0,382.9 775.7,384.8 784.6,386.1" fill="none" stroke="#0a0a0a" stroke-width="1.0" stroke-linejoin="round" stroke-linecap="round" />
<polyline points="787.1,384.2 815.6,398.1" fill="none" stroke="#0a0a0a" stroke-width="1.1" stroke-linejoin="round" stroke-linecap="round" />
<polyline points="815.0,405.1 823.2,407.0" fill="none" stroke="#0a0a0a" stroke-width="1.0" stroke-linejoin="round" stroke-linecap="round" />
<polyline points="822.6,412.0 965.8,428.2 1162.3,449.3" fill="none" stroke="#0a0a0a" stroke-width="1.1" stroke-linejoin="round" stroke-linecap="round" />
<polyline points="976.8,349.6 965.8,428.2 952.5,525.0" fill="none" stroke="#0a0a0a" stroke-width="1.1" stroke-linejoin="round" stroke-linecap="round" />
<polyline points="1145.2,383.5 1172.5,541.4" fill="none" stroke="#0a0a0a" stroke-width="1.9" stroke-linejoin="round" stroke-linecap="round" />
<polyline points="1151.8,384.0 1179.2,541.4" fill="none" stroke="#0a0a0a" stroke-width="1.2" stroke-linejoin="round" stroke-linecap="round" />
<polyline points="1157.9,383.0 1188.1,546.6" fill="none" stroke="#0a0a0a" stroke-width="1.9" stroke-linejoin="round" stroke-linecap="round" />
<polyline points="1176.2,372.8 1197.5,549.0" fill="none" stroke="#0a0a0a" stroke-width="1.0" stroke-linejoin="round" stroke-linecap="round" />
<polyline points="1190.4,366.2 1228.2,543.8" fill="none" stroke="#0a0a0a" stroke-width="1.9" stroke-linejoin="round" stroke-linecap="round" />
<polyline points="1195.9,365.2 1234.3,542.4" fill="none" stroke="#0a0a0a" stroke-width="1.2" stroke-linejoin="round" stroke-linecap="round" />
<polyline points="1201.0,365.2 1241.0,541.9" fill="none" stroke="#0a0a0a" stroke-width="1.9" stroke-linejoin="round" stroke-linecap="round" />
<polyline points="1214.2,379.4 1243.8,540.9" fill="none" stroke="#0a0a0a" stroke-width="1.0" stroke-linejoin="round" stroke-linecap="round" />
<polyline points="1158.5,458.2 1168.0,458.2 1206.7,446.8" fill="none" stroke="#0a0a0a" stroke-width="1.0" stroke-linejoin="round" stroke-linecap="round" />
<polyline points="1207.4,441.1 1217.5,439.8" fill="none" stroke="#0a0a0a" stroke-width="1.0" stroke-linejoin="round" stroke-linecap="round" />
<polyline points="1217.5,433.5 1230.8,434.1" fill="none" stroke="#0a0a0a" stroke-width="1.0" stroke-linejoin="round" stroke-linecap="round" />
</g>
<g id="world-axes" stroke="#5c5f63" stroke-width="1" fill="none">
<path d="M43.5 634 L43.5 666.5 L79 671 M43.5 666.5 L50.7 653"/>
</g>
<text class="ax" x="44.8" y="635">z</text>
<text class="ax" x="52.5" y="652">y</text>
<text class="ax" x="80.5" y="672.5">x</text>
<g id="cursor"><path d="M735.2 224.6 L735.2 239.8 L739.2 236.2 L745.6 235.4 Z" fill="#fff" stroke="#2a2d33" stroke-width="1.2" stroke-linejoin="round"/></g>
</svg>
<div id="title"><span>Perspective</span><i></i><b></b></div>
</div>
</body></html>
